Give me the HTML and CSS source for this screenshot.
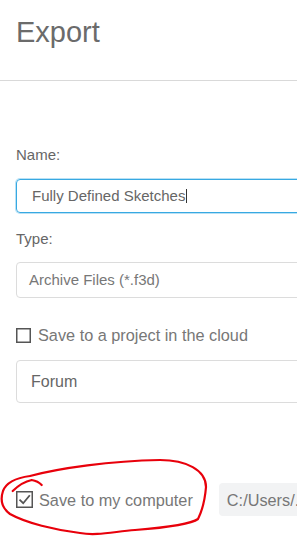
FILE: index.html
```html
<!DOCTYPE html>
<html lang="en">
<head>
  <meta charset="UTF-8" />
  <meta name="viewport" content="width=device-width, initial-scale=1" />
  <title>Export</title>
  <link rel="stylesheet" href="styles.css">
</head>
<body>
  <div class="dialog">
    <div class="header">
      <h1>Export</h1>
    </div>

    <div class="form">
      <div class="label">Name:</div>
      <div class="field active">Fully Defined Sketches<span class="caret"></span></div>

      <div class="label type-label">Type:</div>
      <div class="field select">Archive Files (*.f3d)</div>

      <label class="check-row cloud">
        <svg class="box" width="15" height="15" viewBox="0 0 15 15">
          <rect x="0.75" y="0.75" width="13.5" height="13.5" fill="#fff" stroke="#555" stroke-width="1.5"/>
        </svg>
        Save to a project in the cloud
      </label>
      <div class="field project">Forum</div>

      <div class="bottom-row">
        <label class="check-row">
          <svg class="box" width="17" height="17" viewBox="0 0 17 17">
            <rect x="0.75" y="0.75" width="15.5" height="15.5" fill="#fff" stroke="#555" stroke-width="1.5"/>
            <path d="M3.5 8.6 L7.2 12.2 L13.8 4.2" fill="none" stroke="#555" stroke-width="1.8"/>
          </svg>
          Save to my computer
        </label>
        <div class="path">C:/Users/.../Documents</div>
      </div>
    </div>
  </div>

  <!-- red marker drawn over the screenshot -->
  <svg class="scribble" width="297" height="537" viewBox="0 0 297 537">
    <path d="M12.7 491 Q22 482 31.7 480 Q38 481 41.7 485" />
    <path d="M30 476 C60 468 110 461 160 460 C186 460 206 470 206 487 C205 499 202 511 198 519 C190 525 160 528 135 530 C112 532 96 536 80 533 C55 530 26 523 10 514 C2 508 0 500 3 491 C6 483 15 478 30 476" />
  </svg>
</body>
</html>
```

FILE: styles.css
```css
* { box-sizing: border-box; }
html, body {
  margin: 0;
  padding: 0;
  background: #fff;
  overflow: hidden;
}
body {
  font-family: "Liberation Sans", Arial, sans-serif;
  color: #666;
  width: 297px;
  height: 537px;
  position: relative;
}
.dialog {
  width: 440px;
}
.header {
  height: 81px;
  padding: 16px 0 0 16px;
  border-bottom: 1px solid #d9d9d9;
}
.header h1 {
  margin: 0;
  font-size: 29px;
  line-height: 33px;
  font-weight: normal;
  color: #6b6b6b;
}
.form {
  padding: 65px 0 0 16px;
}
.label {
  font-size: 15px;
  line-height: 18px;
  color: #666;
  margin-bottom: 15px;
}
.type-label {
  margin-top: 17px;
  margin-bottom: 14px;
}
.field {
  border: 1px solid #dcdcdc;
  border-radius: 4px;
  font-size: 15px;
  line-height: 18px;
  color: #6a6a6a;
  display: flex;
  align-items: center;
}
.field.active {
  height: 34px;
  padding-left: 15px;
  border-color: #37a9e2;
  box-shadow: 0 0 0 1px rgba(55, 169, 226, 0.35);
  color: #666;
}
.caret {
  display: inline-block;
  width: 1px;
  height: 14px;
  margin-left: 1px;
  background: #333;
}
.field.select {
  height: 36px;
  padding-left: 12px;
  color: #777;
}
.check-row {
  display: flex;
  align-items: center;
  gap: 7px;
  font-size: 16.3px;
  line-height: 20px;
  color: #777;
}
.check-row .box {
  flex: none;
}
.cloud {
  margin-top: 27px;
  margin-bottom: 15px;
}
.field.project {
  height: 43px;
  padding-left: 14px;
  font-size: 16px;
  line-height: 20px;
  color: #666;
}
.bottom-row {
  margin-top: 80px;
  display: flex;
  align-items: center;
}
.bottom-row .check-row {
  gap: 6px;
}
.path {
  margin-left: 26px;
  height: 33px;
  padding: 0 8px;
  background: #f2f3f4;
  border-radius: 4px;
  font-size: 16.3px;
  line-height: 20px;
  color: #777;
  display: flex;
  align-items: center;
  white-space: nowrap;
}
.scribble {
  position: absolute;
  left: 0;
  top: 0;
  pointer-events: none;
}
.scribble path {
  fill: none;
  stroke: #e8000b;
  stroke-width: 2.2;
  stroke-linecap: round;
  stroke-linejoin: round;
}
```
